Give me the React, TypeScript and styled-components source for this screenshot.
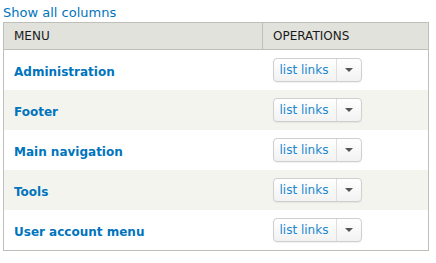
import React from "react";
import styled, { createGlobalStyle } from "styled-components";

const Global = createGlobalStyle`
  html, body { margin: 0; padding: 0; background: #ffffff; }
  body { font-family: "DejaVu Sans", Verdana, sans-serif; color: #333; }
`;

const Page = styled.div`
  padding: 4px 7px 0 3px;
`;

const ShowAll = styled.a`
  display: block;
  font-size: 13px;
  line-height: 18px;
  color: #0074bd;
  text-decoration: none;
`;

const Table = styled.table`
  width: 426px;
  border-collapse: collapse;
  table-layout: fixed;
  border: 1px solid #bfbfba;
`;

const Th = styled.th<{ $w?: number }>`
  ${(p) => (p.$w ? `width: ${p.$w}px;` : "")}
  height: 26px;
  padding: 0 10px;
  background: #e1e2dc;
  border-bottom: 1px solid #bfbfba;
  border-left: 1px solid #bfbfba;
  text-align: left;
  font-weight: normal;
  font-size: 12px;
  color: #1a1a1a;
  text-transform: uppercase;
  &:first-child { border-left: none; }
`;

const Tr = styled.tr<{ $alt: boolean }>`
  background: ${(p) => (p.$alt ? "#f3f4ee" : "#ffffff")};
`;

const Td = styled.td`
  height: 40px;
  padding: 0 10px;
  vertical-align: middle;
`;

const MenuLink = styled.a`
  font-size: 12px;
  font-weight: bold;
  color: #0074bd;
  text-decoration: none;
`;

const DropButton = styled.div`
  display: inline-flex;
  align-items: stretch;
  height: 22px;
  border: 1px solid #cfcfcf;
  border-radius: 4px;
  background: linear-gradient(#ffffff, #f2f2f2);
  box-shadow: 0 1px 1px rgba(0, 0, 0, 0.06);
  vertical-align: middle;
`;

const Action = styled.a`
  display: flex;
  align-items: center;
  padding: 0 8px 0 6px;
  font-size: 12px;
  color: #1b87cf;
  text-decoration: none;
`;

const Toggle = styled.button`
  display: flex;
  align-items: center;
  justify-content: center;
  width: 25px;
  padding: 0;
  border: none;
  border-left: 1px solid #dedede;
  background: transparent;
`;

const Arrow = styled.span`
  width: 0;
  height: 0;
  border-left: 4px solid transparent;
  border-right: 4px solid transparent;
  border-top: 4px solid #555;
`;

const menus = [
  "Administration",
  "Footer",
  "Main navigation",
  "Tools",
  "User account menu",
];

export default function App() {
  return (
    <Page>
      <Global />
      <ShowAll href="#">Show all columns</ShowAll>
      <Table>
        <thead>
          <tr>
            <Th $w={238}>Menu</Th>
            <Th>Operations</Th>
          </tr>
        </thead>
        <tbody>
          {menus.map((m, i) => (
            <Tr key={m} $alt={i % 2 === 1}>
              <Td>
                <MenuLink href="#">{m}</MenuLink>
              </Td>
              <Td>
                <DropButton>
                  <Action href="#">list links</Action>
                  <Toggle aria-label="List additional actions">
                    <Arrow />
                  </Toggle>
                </DropButton>
              </Td>
            </Tr>
          ))}
        </tbody>
      </Table>
    </Page>
  );
}
